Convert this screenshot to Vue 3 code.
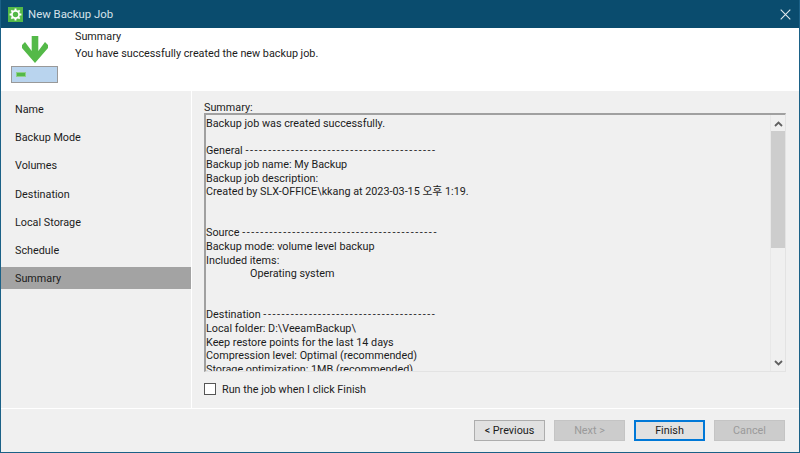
<script setup>
const nav = ['Name', 'Backup Mode', 'Volumes', 'Destination', 'Local Storage', 'Schedule', 'Summary']
const lines = [
  { t: 'Backup job was created successfully.' }, { t: '' },
  { t: 'General ', dash: '-'.repeat(42) },
  { t: 'Backup job name: My Backup' },
  { t: 'Backup job description:' },
  { t: 'Created by SLX-OFFICE\\kkang at 2023-03-15 오후 1:19.' }, { t: '' }, { t: '' },
  { t: 'Source ', dash: '-'.repeat(43) },
  { t: 'Backup mode: volume level backup' },
  { t: 'Included items:' },
  { t: '\tOperating system' }, { t: '' }, { t: '' },
  { t: 'Destination ', dash: '-'.repeat(38) },
  { t: 'Local folder: D:\\VeeamBackup\\' },
  { t: 'Keep restore points for the last 14 days' },
  { t: 'Compression level: Optimal (recommended)' },
  { t: 'Storage optimization: 1MB (recommended)' }
]
const buttons = [
  { label: '< Previous', cls: '' },
  { label: 'Next >', cls: 'off' },
  { label: 'Finish', cls: 'primary' },
  { label: 'Cancel', cls: 'off' }
]
</script>

<template>
  <div class="win">
    <div class="title">
      <svg class="logo" width="15" height="15" viewBox="0 0 15 15">
        <rect width="15" height="15" fill="#54b948" />
        <circle cx="7.5" cy="7.5" r="3.6" fill="none" stroke="#fff" stroke-width="1.8" />
        <path d="M7.5 1.6v2.2M7.5 11.2v2.2M1.6 7.5h2.2M11.2 7.5h2.2M3.3 3.3l1.6 1.6M10.1 10.1l1.6 1.6M11.7 3.3l-1.6 1.6M4.9 10.1l-1.6 1.6" stroke="#fff" stroke-width="1.9" />
      </svg>
      <span class="title-text">New Backup Job</span>
      <svg class="close" width="11" height="11" viewBox="0 0 11 11">
        <path d="M.7.7l9.6 9.6M10.3.7L.7 10.3" stroke="#dfe8ee" stroke-width="1.1" />
      </svg>
    </div>
    <div class="head">
      <div class="head-icon">
        <svg width="26" height="27" viewBox="0 0 26 27">
          <path d="M9.7 0h6.6v15L23 6l3 3v3L13 27 0 12V9l3-3 6.7 9z" fill="#54b948" />
        </svg>
        <div class="drive"><span class="led"></span></div>
      </div>
      <div class="head-text">
        <div>Summary</div>
        <div>You have successfully created the new backup job.</div>
      </div>
    </div>
    <div class="middle">
      <nav class="side">
        <div v-for="n in nav" :key="n" class="item" :class="{ active: n === 'Summary' }">{{ n }}</div>
      </nav>
      <main class="main">
        <div class="label">Summary:</div>
        <div class="box">
          <div class="content">
            <div v-for="(l, i) in lines" :key="i" class="line">{{ l.t }}<span v-if="l.dash" class="dash">{{ l.dash }}</span></div>
          </div>
          <div class="scroll">
            <svg class="arrow up" width="9" height="6" viewBox="0 0 9 6"><path d="M1 5l3.5-3.5L8 5" fill="none" stroke="#606060" stroke-width="1.8" /></svg>
            <div class="track"><div class="thumb"></div></div>
            <svg class="arrow down" width="9" height="6" viewBox="0 0 9 6"><path d="M1 1l3.5 3.5L8 1" fill="none" stroke="#606060" stroke-width="1.8" /></svg>
          </div>
        </div>
        <label class="check"><span class="cb"></span>Run the job when I click Finish</label>
      </main>
    </div>
    <div class="foot">
      <button v-for="b in buttons" :key="b.label" class="btn" :class="b.cls">{{ b.label }}</button>
    </div>
  </div>
</template>

<style>
html, body { margin: 0; padding: 0; background: #f0f0f0; }
</style>

<style scoped>
.win {
  width: 800px;
  height: 453px;
  box-sizing: border-box;
  display: flex;
  flex-direction: column;
  background: #f0f0f0;
  border: 1px solid #1b6187;
  border-top: 0;
  font-family: Roboto, "Noto Sans CJK KR", sans-serif;
  font-size: 10.8px;
  color: #1c1c1c;
  overflow: hidden;
}
.title {
  height: 28px;
  flex: none;
  background: #0a4c6e;
  display: flex;
  align-items: center;
  padding: 0 7px 0 7px;
  color: #d5e2ea;
}
.logo { margin-right: 5px; }
.title-text { flex: 1; font-size: 11.4px; }
.close { margin-right: 1px; }
.head {
  height: 63px;
  flex: none;
  background: #fff;
  display: flex;
}
.head-icon {
  width: 74px;
  flex: none;
  padding: 8px 0 0 10px;
  box-sizing: border-box;
}
.head-icon svg { display: block; margin: 0 0 3px 11px; }
.drive {
  width: 47px;
  height: 17px;
  box-sizing: border-box;
  background: #b9d4ee;
  border: 1px solid #999;
  display: flex;
  align-items: center;
  padding-left: 4px;
}
.led {
  width: 10px;
  height: 5px;
  box-sizing: border-box;
  background: #54b948;
  border: 1px solid #8fd08a;
}
.head-text { line-height: 17px; }
.middle { flex: 1; display: flex; min-height: 0; border-bottom: 1px solid #fff; }
.side {
  width: 190px;
  flex: none;
  padding-top: 7px;
  border-right: 1px solid #fff;
  display: flex;
  flex-direction: column;
  gap: 6.2px;
}
.item { height: 22px; line-height: 23px; padding-left: 14px; }
.item.active { background: #a3a3a3; }
.main { flex: 1; padding: 9px 13px 0 12px; min-width: 0; }
.label { line-height: 16px; height: 13px; }
.box {
  height: 259px;
  box-sizing: border-box;
  border: 2px solid #a0a0a0;
  border-right: 1px solid #e3e3e3;
  border-bottom: 1px solid #e3e3e3;
  display: flex;
  overflow: hidden;
}
.content { flex: 1; padding: 2px 0 0 0; overflow: hidden; min-width: 0; }
.line {
  height: 13.68px;
  line-height: 13.68px;
  white-space: pre;
  tab-size: 44px;
}
.dash { letter-spacing: 1.57px; }
.scroll {
  width: 14px;
  flex: none;
  background: #f0f0f0;
  border-left: 1px solid #e8e8e8;
  display: flex;
  flex-direction: column;
  align-items: center;
}
.arrow { flex: none; }
.arrow.up { margin: 6px 0 4px; }
.arrow.down { margin: 6px 0 5px; }
.track { flex: 1; width: 100%; }
.thumb { height: 117px; background: #cdcdcd; }
.check { display: flex; align-items: center; height: 14px; margin-top: 10px; }
.cb {
  width: 10px;
  height: 10px;
  border: 1px solid #555;
  background: #fff;
  margin-right: 6px;
}
.foot {
  height: 43px;
  flex: none;
  display: flex;
  justify-content: flex-end;
  align-items: flex-start;
  gap: 9px;
  padding: 11px 14px 0 0;
  box-sizing: border-box;
}
.btn {
  width: 71px;
  height: 21px;
  padding: 0;
  box-sizing: border-box;
  font: inherit;
  color: #1c1c1c;
  background: #e1e1e1;
  border: 1px solid #adadad;
}
.btn.off { background: #ccc; border-color: #c4c4c4; color: #9a9a9a; }
.btn.primary { border: 2px solid #0078d7; background: #e1e1e1; }
</style>
